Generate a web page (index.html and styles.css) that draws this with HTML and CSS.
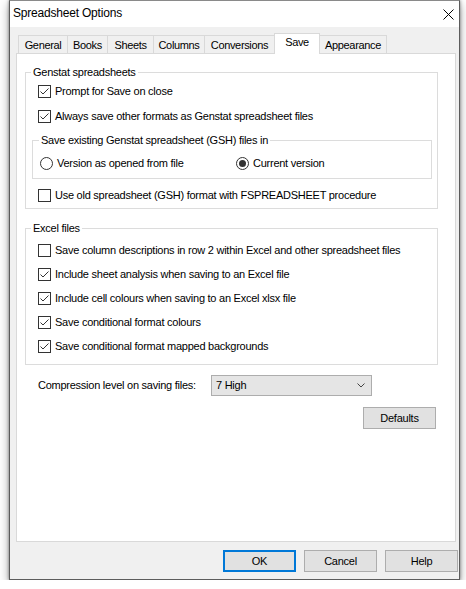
FILE: index.html
```html
<!DOCTYPE html>
<html>
<head>
<meta charset="utf-8">
<title>Spreadsheet Options</title>
<link rel="stylesheet" href="styles.css">
</head>
<body>
<div class="window">
  <div class="titlebar">
    <span class="title">Spreadsheet Options</span>
    <svg class="close" viewBox="0 0 11 11" width="11" height="11"><path d="M0.5 0.5 10.5 10.5M10.5 0.5 0.5 10.5" stroke="#000" stroke-width="1" fill="none"/></svg>
  </div>
  <div class="client">
    <div class="tabs">
      <div class="tab tab-general">General</div>
      <div class="tab tab-books">Books</div>
      <div class="tab tab-sheets">Sheets</div>
      <div class="tab tab-columns">Columns</div>
      <div class="tab tab-conversions">Conversions</div>
      <div class="tab tab-save selected">Save</div>
      <div class="tab tab-appearance">Appearance</div>
    </div>
    <div class="panel">
      <fieldset class="group group-genstat">
        <legend>Genstat spreadsheets</legend>
        <div class="row tall">
          <svg class="cb" viewBox="0 0 13 13"><rect x="0.5" y="0.5" width="12" height="12" fill="#fff" stroke="#333"/><path d="M2.5 6.5 5 9 10.5 3.5" fill="none" stroke="#333"/></svg>
          <span>Prompt for Save on close</span>
        </div>
        <div class="row tall">
          <svg class="cb" viewBox="0 0 13 13"><rect x="0.5" y="0.5" width="12" height="12" fill="#fff" stroke="#333"/><path d="M2.5 6.5 5 9 10.5 3.5" fill="none" stroke="#333"/></svg>
          <span>Always save other formats as Genstat spreadsheet files</span>
        </div>
        <fieldset class="group inner">
          <legend>Save existing Genstat spreadsheet (GSH) files in</legend>
          <div class="radios">
            <div class="radio">
              <svg class="rb" viewBox="0 0 13 13"><circle cx="6.5" cy="6.5" r="6" fill="#fff" stroke="#333"/></svg>
              <span>Version as opened from file</span>
            </div>
            <div class="radio">
              <svg class="rb" viewBox="0 0 13 13"><circle cx="6.5" cy="6.5" r="6" fill="#fff" stroke="#333"/><circle cx="6.5" cy="6.5" r="3.5" fill="#333"/></svg>
              <span>Current version</span>
            </div>
          </div>
        </fieldset>
        <div class="row last">
          <svg class="cb" viewBox="0 0 13 13"><rect x="0.5" y="0.5" width="12" height="12" fill="#fff" stroke="#333"/></svg>
          <span>Use old spreadsheet (GSH) format with FSPREADSHEET procedure</span>
        </div>
      </fieldset>
      <fieldset class="group group-excel">
        <legend>Excel files</legend>
        <div class="row">
          <svg class="cb" viewBox="0 0 13 13"><rect x="0.5" y="0.5" width="12" height="12" fill="#fff" stroke="#333"/></svg>
          <span>Save column descriptions in row 2 within Excel and other spreadsheet files</span>
        </div>
        <div class="row">
          <svg class="cb" viewBox="0 0 13 13"><rect x="0.5" y="0.5" width="12" height="12" fill="#fff" stroke="#333"/><path d="M2.5 6.5 5 9 10.5 3.5" fill="none" stroke="#333"/></svg>
          <span>Include sheet analysis when saving to an Excel file</span>
        </div>
        <div class="row">
          <svg class="cb" viewBox="0 0 13 13"><rect x="0.5" y="0.5" width="12" height="12" fill="#fff" stroke="#333"/><path d="M2.5 6.5 5 9 10.5 3.5" fill="none" stroke="#333"/></svg>
          <span>Include cell colours when saving to an Excel xlsx file</span>
        </div>
        <div class="row">
          <svg class="cb" viewBox="0 0 13 13"><rect x="0.5" y="0.5" width="12" height="12" fill="#fff" stroke="#333"/><path d="M2.5 6.5 5 9 10.5 3.5" fill="none" stroke="#333"/></svg>
          <span>Save conditional format colours</span>
        </div>
        <div class="row">
          <svg class="cb" viewBox="0 0 13 13"><rect x="0.5" y="0.5" width="12" height="12" fill="#fff" stroke="#333"/><path d="M2.5 6.5 5 9 10.5 3.5" fill="none" stroke="#333"/></svg>
          <span>Save conditional format mapped backgrounds</span>
        </div>
      </fieldset>
      <div class="compression">
        <span class="label">Compression level on saving files:</span>
        <div class="select">
          <span>7 High</span>
          <svg class="chev" viewBox="0 0 8 5" width="8" height="5"><path d="M0.5 0.5 4 4 7.5 0.5" fill="none" stroke="#444" stroke-width="1"/></svg>
        </div>
      </div>
      <div class="defaults-row">
        <div class="btn">Defaults</div>
      </div>
    </div>
    <div class="buttons">
      <div class="btn default">OK</div>
      <div class="btn">Cancel</div>
      <div class="btn">Help</div>
    </div>
  </div>
</div>
</body>
</html>
```

FILE: styles.css
```css
html, body {
  margin: 0;
  padding: 0;
  background: #ffffff;
}

body {
  font-family: "Liberation Sans", Arial, sans-serif;
  font-size: 11px;
  line-height: 13px;
  letter-spacing: -0.25px;
  color: #000;
}

.window {
  box-sizing: border-box;
  margin-left: 9px;
  width: 451px;
  height: 580px;
  border: 1px solid #5c5c5c;
  border-top-color: #8a8a8a;
  background: #f0f0f0;
  display: flex;
  flex-direction: column;
  box-shadow: 0 0 3px rgba(0, 0, 0, 0.45), 0 4px 10px rgba(0, 0, 0, 0.35);
}

.titlebar {
  height: 26px;
  background: #ffffff;
  display: flex;
  align-items: center;
  justify-content: space-between;
  padding: 0 5px 0 3px;
  flex: none;
}

.title {
  font-size: 12px;
  letter-spacing: -0.2px;
  margin-top: -2px;
}

.close {
  display: block;
  margin-top: 1px;
}

.client {
  flex: 1;
  display: flex;
  flex-direction: column;
  padding: 6px 0 7px 0;
  min-height: 0;
}

.tabs {
  height: 20px;
  display: flex;
  align-items: flex-end;
  margin-left: 8px;
  flex: none;
}

.tab {
  box-sizing: border-box;
  height: 18px;
  padding: 1px 0 0;
  border: 1px solid #d9d9d9;
  border-bottom: none;
  margin-left: -1px;
  background: #f0f0f0;
  display: flex;
  align-items: center;
  justify-content: center;
  white-space: nowrap;
  letter-spacing: -0.35px;
}

.tab:first-child {
  margin-left: 0;
}

.tab-general { width: 50px; }
.tab-books { width: 41px; }
.tab-sheets { width: 47px; }
.tab-columns { width: 52px; }
.tab-conversions { width: 71px; }
.tab-save { width: 46px; }
.tab-appearance { width: 68px; }

.tab.selected {
  height: 21px;
  margin-bottom: -1px;
  background: #ffffff;
  padding: 0 0 4px;
  position: relative;
  z-index: 1;
}

.panel {
  flex: 1;
  box-sizing: border-box;
  margin: 0 3px 0 6px;
  background: #ffffff;
  border: 1px solid #d9d9d9;
  padding: 12px 17px 0 8px;
  display: flex;
  flex-direction: column;
}

.group {
  margin: 0;
  padding: 0 0 0 5px;
  border: 1px solid #dcdcdc;
  min-width: 0;
}

.group legend {
  padding: 0 2px;
  line-height: 13px;
}

.group-genstat {
  padding-bottom: 1px;
}

.group-excel {
  margin-top: 13px;
  padding-top: 3px;
  padding-bottom: 6px;
}

.row {
  height: 24px;
  display: flex;
  align-items: center;
  padding-left: 7px;
}

.row.tall {
  height: 25px;
}

.row.last {
  margin-top: 4px;
}

.cb, .rb {
  width: 13px;
  height: 13px;
  flex: none;
  margin-right: 4px;
  display: block;
}

.group.inner {
  margin: 5px 5px 0 1px;
  padding: 6px 0 5px 6px;
}

.radios {
  display: grid;
  grid-template-columns: 196px auto;
  height: 20px;
  align-items: center;
  padding-left: 1px;
}

.radio {
  display: flex;
  align-items: center;
}

.compression {
  display: grid;
  grid-template-columns: 173px 161px;
  align-items: center;
  margin-top: 10px;
  padding-left: 13px;
}

.select {
  box-sizing: border-box;
  height: 21px;
  background: #e5e5e5;
  border: 1px solid #adadad;
  display: flex;
  align-items: center;
  justify-content: space-between;
  padding: 0 6px 0 4px;
}

.chev {
  display: block;
}

.defaults-row {
  display: flex;
  justify-content: flex-end;
  margin-top: 11px;
  padding-right: 2px;
}

.btn {
  box-sizing: border-box;
  width: 73px;
  height: 22px;
  background: #e1e1e1;
  border: 1px solid #adadad;
  display: flex;
  align-items: center;
  justify-content: center;
}

.buttons {
  flex: none;
  display: flex;
  justify-content: flex-end;
  gap: 8px;
  margin-top: 8px;
  padding-right: 1px;
}

.btn.default {
  border: 2px solid #0078d7;
}
```
